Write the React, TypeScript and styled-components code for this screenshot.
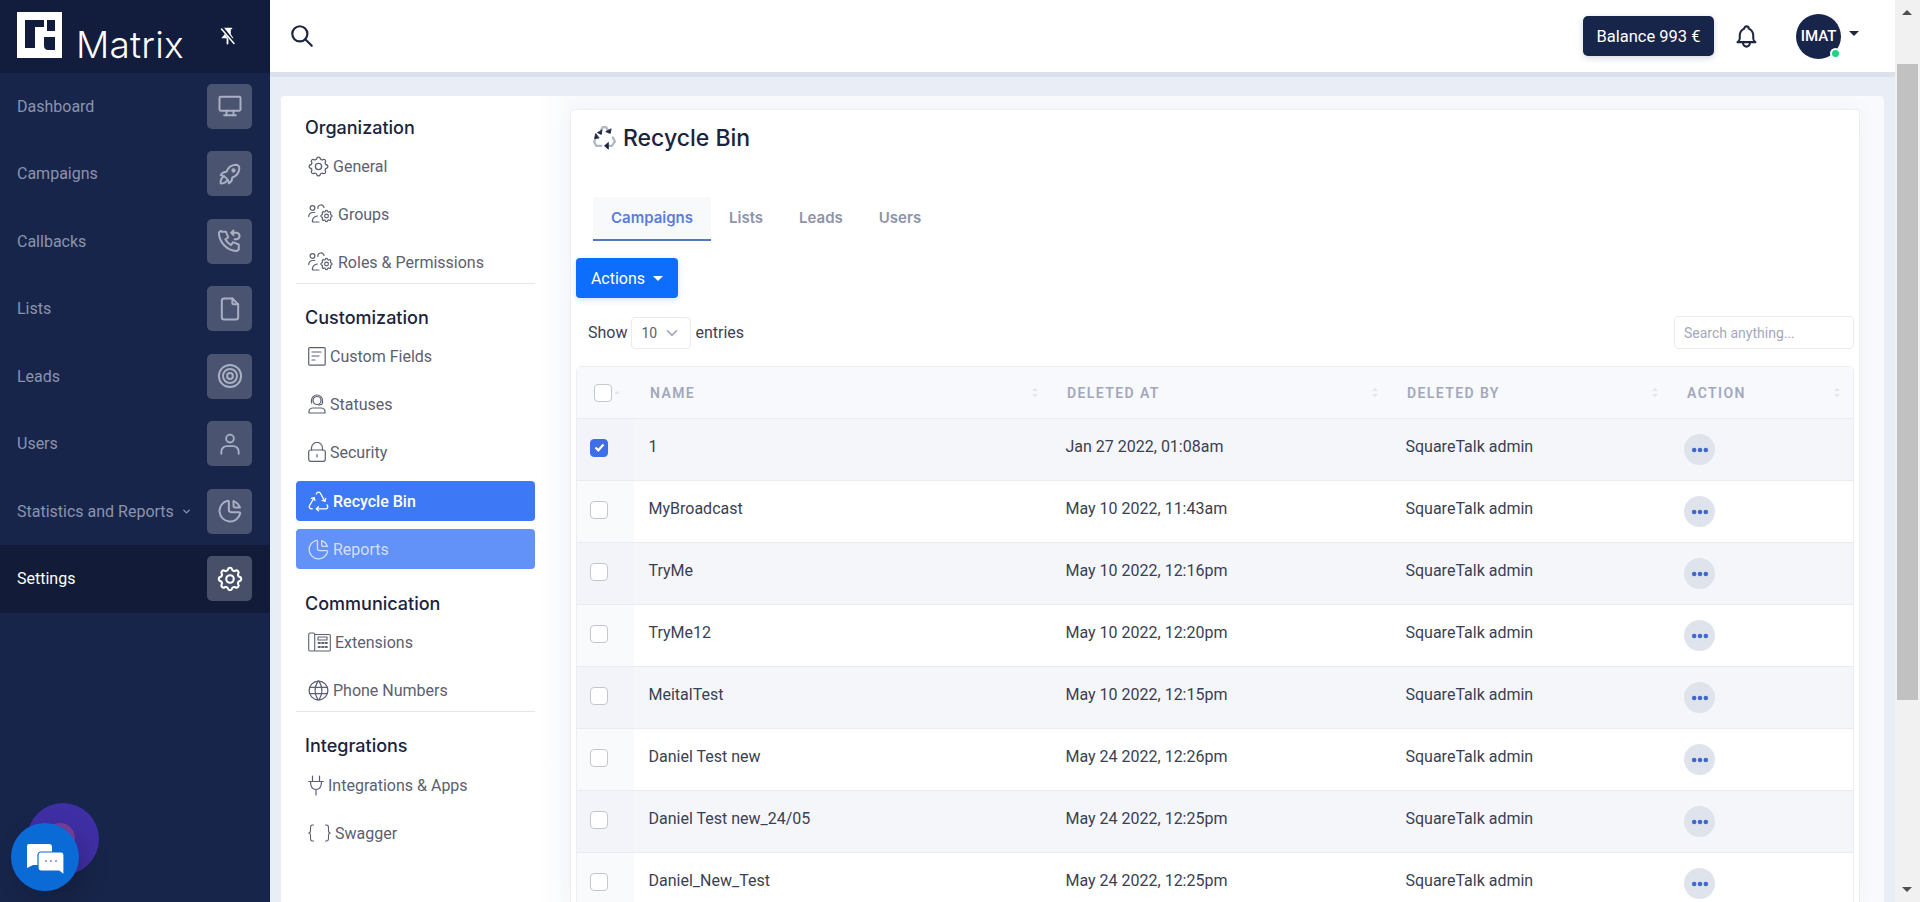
import React from "react";
import styled, { createGlobalStyle } from "styled-components";
import {
  TbDeviceDesktop, TbRocket, TbFile, TbChartPie, TbSettings, TbSearch, TbBell,
  TbRecycle, TbWorld, TbChevronDown, TbDots,
} from "react-icons/tb";

const Global = createGlobalStyle`
  html, body { margin: 0; padding: 0; height: 100%; overflow: hidden; background: #e9edf6; }
  body { font-family: Inter, "Liberation Sans", sans-serif; }
  * { box-sizing: border-box; }
`;

const Shell = styled.div`display: flex; width: 1920px; height: 902px; overflow: hidden;`;
const Sidebar = styled.aside`width: 270px; flex: none; background: #17254a; display: flex; flex-direction: column;`;
const Brand = styled.div`height: 72.5px; flex: none; background: #121d3e; display: flex; align-items: flex-start; padding: 12px 0 0 17px;`;
const BrandText = styled.span`font: 300 37px/1 Inter, sans-serif; color: #fff; margin: 14px 0 0 14px; letter-spacing: .2px;`;
const PinBox = styled.span`color: #fff; display: flex; margin: 15px 0 0 36px;`;
const MenuRow = styled.div<{ $active?: boolean }>`
  height: 67.5px; display: flex; align-items: center; justify-content: space-between;
  padding: 0 18px 0 17px; background: ${p => (p.$active ? "#121b38" : "transparent")};
  color: ${p => (p.$active ? "#fff" : "#8c93ad")}; font: 400 16px Roboto, sans-serif;
`;
const MenuLabel = styled.span`display: flex; align-items: center; gap: 7px; svg { stroke-width: 3; }`;
const MenuIcon = styled.span<{ $active?: boolean }>`
  width: 45px; height: 45px; border-radius: 5px; flex: none; display: flex; align-items: center; justify-content: center;
  background: ${p => (p.$active ? "#484f68" : "#4a5470")}; color: ${p => (p.$active ? "#fff" : "#aab0c4")}; font-size: 28px;
  svg { stroke-width: 1.7; }
`;
const Main = styled.div`flex: 1; display: flex; flex-direction: column; min-width: 0;`;
const Topbar = styled.header`
  height: 72px; flex: none; background: #fff; box-shadow: 0 5px 0 #dbe1ec; display: flex; align-items: center;
  padding: 0 36px 0 19px; position: relative; z-index: 1;
`;
const SearchBtn = styled.span`font-size: 26px; color: #1e2540; display: flex; margin-right: auto;`;
const Balance = styled.button`
  height: 40px; width: 131px; border: 0; border-radius: 5px; background: #17254a; color: #fff;
  font: 400 16.5px Roboto, sans-serif; box-shadow: 0 2px 6px rgba(23,37,74,.18); padding: 0;
`;
const BellBtn = styled.span`font-size: 27px; color: #1e2540; display: flex; margin: 0 36px 0 19px; svg { stroke-width: 1.8; }`;
const Avatar = styled.span`
  width: 45px; height: 45px; border-radius: 50%; background: #17254a; color: #fff; position: relative;
  display: flex; align-items: center; justify-content: center; font: 500 15px Roboto, sans-serif;
`;
const Dot = styled.i`position: absolute; right: 0; bottom: 0; width: 11px; height: 11px; border-radius: 50%; background: #1fd286; border: 2px solid #fff;`;
const Caret = styled.i`width: 0; height: 0; border: 5px solid transparent; border-top-color: #1e2540; border-bottom: 0; margin: -5px 0 0 8px;`;
const Content = styled.div`flex: 1; padding: 24px 11px 0; min-height: 0;`;
const Panel = styled.div`
  height: 100%; background: linear-gradient(90deg, #fff 0, #fff 256px, #f9fafd 289px, #f9fafd 100%);
  border-radius: 4px 4px 0 0; display: flex;
`;
const SettingsNav = styled.nav`width: 289px; flex: none; padding: 12px 35px 0 15px; display: flex; flex-direction: column;`;
const NavHeading = styled.h3<{ $gap?: boolean }>`
  margin: ${p => (p.$gap ? "7px" : "0")} 0 0; height: 38px; flex: none; padding-left: 9px; display: flex; align-items: center;
  font: 500 18px Inter, sans-serif; color: #1a2340;
`;
const NavItem = styled.a<{ $variant?: "active" | "soft"; $nudge?: boolean }>`
  height: 40px; flex: none; display: flex; align-items: center; gap: 4px; padding-left: 12px; margin: ${p => (p.$nudge ? "1px" : "0")} 0 8px; border-radius: 4px;
  font: ${p => (p.$variant === "active" ? 500 : 400)} 16px Roboto, sans-serif;
  color: ${p => (p.$variant === "active" ? "#fff" : p.$variant === "soft" ? "rgba(255,255,255,.72)" : "#5c6072")};
  background: ${p => (p.$variant === "active" ? "#3d78f7" : p.$variant === "soft" ? "#6291f8" : "transparent")};
  svg { flex: none; }
`;
const TightIcon = styled.span`display: flex; margin: 0 -2px; svg { width: 25px; height: 25px; stroke-width: 1.25; }`;
const NavDivider = styled.hr`border: 0; border-top: 1px solid #e4e7ee; margin: -7px 0 14px; width: 100%;`;
const Card = styled.section`
  flex: none; width: 1290px; margin-top: 13px; background: #fff; border: solid #eceef3; border-width: 1px 1px 0; border-radius: 5px 5px 0 0;
  padding: 0 5px; overflow: hidden; box-shadow: 0 0 20px rgba(60,70,110,.04);
`;
const PageTitle = styled.h1`
  margin: 0; height: 55px; padding-left: 16px; display: flex; align-items: center; gap: 6px;
  font: 500 23px Inter, sans-serif; color: #1a2340;
`;
const Tabs = styled.div`display: flex; margin: 32px 0 0 17px; height: 44px;`;
const Tab = styled.a<{ $active?: boolean }>`
  display: flex; align-items: center; justify-content: center; height: 44px; padding: 0 18px 2px;
  font: 600 15px Inter, sans-serif; color: ${p => (p.$active ? "#5a7ddb" : "#8d93a8")};
  background: ${p => (p.$active ? "#f8f9fb" : "transparent")}; border-bottom: 2px solid ${p => (p.$active ? "#5478c0" : "transparent")};
`;
const ActionsBtn = styled.button`
  display: flex; align-items: center; justify-content: center; gap: 8px; margin-top: 17px; width: 102px; height: 40px;
  border: 0; border-radius: 4px; background: #0d6efd; color: #fff; font: 400 16px Roboto, sans-serif; box-shadow: 0 2px 6px rgba(13,110,253,.2);
`;
const ActionsCaret = styled.i`width: 0; height: 0; border: 5px solid transparent; border-top-color: #fff; border-bottom: 0;`;
const Filters = styled.div`display: flex; align-items: center; justify-content: space-between; margin-top: 18px; height: 33px;`;
const ShowLabel = styled.label`display: flex; align-items: center; gap: 4px; padding-left: 12px; font: 400 16px Roboto, sans-serif; color: #3c4156;`;
const SelectBox = styled.span`
  width: 60px; height: 32px; border: 1px solid #e9ebf1; border-radius: 4px; display: flex; align-items: center; justify-content: space-between;
  padding: 0 9px; font-size: 14px; color: #5c6072; svg { color: #9aa0b2; font-size: 18px; }
`;
const SearchBox = styled.span`
  width: 180px; height: 33px; border: 1px solid #e9ebf1; border-radius: 4px; display: flex; align-items: center; padding-left: 9px;
  font: 400 14px Roboto, sans-serif; color: #a3a9bd;
`;
const Table = styled.div`margin-top: 17px; border: solid #eceef3; border-width: 1px 1px 0; border-radius: 5px 5px 0 0; width: 1278px;`;
const grid = "grid-template-columns: 57px 417px 340px 280px 1fr;";
const HeadRow = styled.div`
  ${grid} display: grid; height: 52px; background: #f8f9fc; border-bottom: 1px solid #e9ebf1; align-items: center;
`;
const HeadCell = styled.div`
  display: flex; align-items: center; justify-content: space-between; padding: 0 13px 0 16px; height: 100%;
  font: 600 14px Roboto, sans-serif; letter-spacing: 1.4px; color: #a2a8bb;
`;
const HeadCheckCell = styled.div`display: flex; padding-left: 17px; gap: 2px; align-items: center;`;
const SortMark = styled.span`display: flex; flex-direction: column; gap: 3px;`;
const SortTri = styled.i<{ $down?: boolean }>`
  width: 0; height: 0; border: 3px solid transparent; border-width: ${p => (p.$down ? "3px 3px 0" : "0 3px 3px")};
  border-${p => (p.$down ? "top" : "bottom")}-color: #e4e6ec;
`;
const Row = styled.div<{ $shade: boolean }>`
  ${grid} display: grid; height: 62px; align-items: center; border-bottom: 1px solid #e9ebf1;
  background: ${p => (p.$shade ? "#f5f6fa" : "#fff")};
`;
const CheckCell = styled.div<{ $shade: boolean }>`
  height: 100%; display: flex; align-items: center; padding: 0 0 4px 13px; background: ${p => (p.$shade ? "#f3f4f9" : "#f9fafc")};
`;
const Check = styled.span<{ $on?: boolean }>`
  width: 18px; height: 18px; border-radius: 4px; border: 1px solid ${p => (p.$on ? "#3e6fe8" : "#c5c7cf")};
  background: ${p => (p.$on ? "#3e6fe8" : "#fff")}; display: flex; align-items: center; justify-content: center;
`;
const Cell = styled.div`padding-left: 14.5px; font: 400 16px Roboto, sans-serif; color: #3a3f52; margin-top: -7px;`;
const DotBtn = styled.span`
  margin-left: 13px; width: 31px; height: 31px; border-radius: 50%; background: #dfe3ec; color: #4169c8; display: flex;
  align-items: center; justify-content: center; font-size: 20px;
`;
const Scrollbar = styled.div`width: 25px; flex: none; background: #f1f1f1; position: relative; padding: 0 2px 0 2px;`;
const ArrowUp = styled.i`position: absolute; left: 7px; top: 10px; width: 0; height: 0; border: 5.5px solid transparent; border-bottom-color: #505050; border-top: 0;`;
const ArrowDown = styled.i`position: absolute; left: 7px; bottom: 10px; width: 0; height: 0; border: 5.5px solid transparent; border-top-color: #505050; border-bottom: 0;`;
const Thumb = styled.div`height: 636px; margin-top: 64px; background: #c1c1c1;`;
const ChatBack = styled.div`position: fixed; left: 27px; top: 803px; width: 72px; height: 72px; border-radius: 50%; background: #3f2fa5; z-index: 3;`;
const ChatGlow = styled.div`position: absolute; left: 18px; top: 20px; width: 30px; height: 30px; border-radius: 50%; background: #7b3f9b;`;
const ChatFront = styled.div`
  position: fixed; left: 11px; top: 823px; width: 68px; height: 68px; border-radius: 50%; background: #0a6bd6; z-index: 4;
  display: flex; align-items: center; justify-content: center; padding-top: 4px; box-shadow: 8px 8px 24px rgba(0,0,0,.18);
`;

const S = { fill: "none", stroke: "currentColor", strokeWidth: 1.5, strokeLinecap: "round", strokeLinejoin: "round" } as const;
const gear = "M10.325 4.317c.426 -1.756 2.924 -1.756 3.35 0a1.724 1.724 0 0 0 2.573 1.066c1.543 -.94 3.31 .826 2.37 2.37a1.724 1.724 0 0 0 1.065 2.572c1.756 .426 1.756 2.924 0 3.35a1.724 1.724 0 0 0 -1.066 2.573c.94 1.543 -.826 3.31 -2.37 2.37a1.724 1.724 0 0 0 -2.572 1.065c-.426 1.756 -2.924 1.756 -3.35 0a1.724 1.724 0 0 0 -2.573 -1.066c-1.543 .94 -3.31 -.826 -2.37 -2.37a1.724 1.724 0 0 0 -1.065 -2.572c-1.756 -.426 -1.756 -2.924 0 -3.35a1.724 1.724 0 0 0 1.066 -2.573c-.94 -1.543 .826 -3.31 2.37 -2.37c1 .608 2.296 .07 2.572 -1.065z";

const Logo = () => (
  <svg width="45" height="46" viewBox="0 0 45 46">
    <rect width="45" height="46" fill="#fff" />
    <path d="M8 8H27V15H18V36H8Z" fill="#121d3e" />
    <path d="M30 8H38V19H30Z" fill="#121d3e" />
    <path d="M27 25H38V38H31C28.500 38 27 36 27 34Z" fill="#121d3e" />
  </svg>
);
const PinOff = () => (
  <svg width="16" height="18" viewBox="0 0 16 18" fill="none" strokeLinecap="round">
    <path d="M3.500 1.500h8M5.500 1.500v6l-2.500 3h9l-2 -3v-6" fill="#fff" stroke="#fff" strokeWidth="1.600" />
    <path d="M7.500 11v5.500" stroke="#fff" strokeWidth="1.800" />
    <path d="M3 2l11 14" stroke="#121d3e" strokeWidth="3.400" />
    <path d="M1.500 2l12.500 14.500" stroke="#fff" strokeWidth="1.500" />
  </svg>
);
const CallbackIcon = () => (
  <svg width="28" height="28" viewBox="0 0 24 24" {...S}>
    <path d="M5 4h3.500l2 5l-2.500 1.500a11 11 0 0 0 5 5l1.500 -2.500l5 2v3.500a2 2 0 0 1 -2 2a16 16 0 0 1 -15 -15a2 2 0 0 1 2 -2" />
    <path d="M15 3l-2 2l2 2M13 5h4.500a2.700 2.700 0 0 1 0 5.400h-1.500" />
  </svg>
);
const RingsIcon = () => (
  <svg width="28" height="28" viewBox="0 0 24 24" {...S}>
    <circle cx="12" cy="12" r="9.500" /><circle cx="12" cy="12" r="6" /><circle cx="12" cy="12" r="2.500" />
  </svg>
);
const UserIcon = () => (
  <svg width="26" height="26" viewBox="0 0 24 24" {...S}>
    <circle cx="12" cy="7" r="3.600" />
    <path d="M4 21v-2a5 5 0 0 1 5 -5h6a5 5 0 0 1 5 5v2" />
  </svg>
);
const GearLine = () => (
  <svg viewBox="0 0 24 24" {...S}><path d={gear} /><circle cx="12" cy="12" r="3" /></svg>
);
const TeamGear = () => (
  <svg width="26" height="20" viewBox="0 0 26 20" {...S} strokeWidth={1.200}>
    <circle cx="4.500" cy="4" r="2.400" />
    <path d="M.7 12.500a4 4 0 0 1 4 -4h2" />
    <path d="M10 4.500a3 3 0 0 1 6 -1" />
    <path d="M4.500 18a5 5 0 0 1 5 -6M5 18h6" />
    <svg x="11" y="4.500" width="15" height="15" viewBox="0 0 24 24" strokeWidth={1.900}><path d={gear} /><circle cx="12" cy="12" r="3" /></svg>
  </svg>
);
const FieldsIcon = () => (
  <svg width="18" height="19" viewBox="0 0 18 19" {...S} strokeWidth={1.200}>
    <rect x=".7" y=".7" width="16.500" height="17.500" rx="1" />
    <path d="M4 5h9M4 9h7M4 13h3" />
  </svg>
);
const AgentIcon = () => (
  <svg width="18" height="20" viewBox="0 0 18 20" {...S} strokeWidth={1.200}>
    <circle cx="9" cy="6.500" r="4" />
    <path d="M3.500 9V6.500a5.500 5.500 0 0 1 11 0V9M14.500 9c0 1 -2 2 -4 2" />
    <path d="M1 19v-1.500c0-2 2-3.500 4-3.500h8c2 0 4 1.500 4 3.500V19z" />
  </svg>
);
const LockIcon = () => (
  <svg width="18" height="20" viewBox="0 0 18 20" {...S} strokeWidth={1.200}>
    <rect x=".7" y="8" width="16.600" height="11.300" rx="2" />
    <path d="M3.500 8V6a5.500 5.500 0 0 1 11 0v2M9 12.500v2.500" />
  </svg>
);
const PhoneDesk = () => (
  <svg width="23" height="20" viewBox="0 0 23 20" {...S} strokeWidth={1.100}>
    <rect x=".7" y="1" width="6" height="18" rx="1.500" />
    <path d="M6.700 2.500H21.300a1 1 0 0 1 1 1v14.500a1 1 0 0 1 -1 1H6.700" />
    <rect x="10" y="5" width="9" height="3" />
    <path d="M10.500 11h1.500M14 11h1.500M17.500 11H19M10.500 15h1.500M14 15h1.500M17.500 15H19" strokeWidth={1.800} />
  </svg>
);
const PlugIcon = () => (
  <svg width="16" height="21" viewBox="0 0 16 21" {...S} strokeWidth={1.200}>
    <path d="M4.500 1v5M11.500 1v5M.7 6.500h14.600M2.500 6.500c0 5 2 8 5.500 8s5.500 -3 5.500 -8M8 14.500V20" />
  </svg>
);
const BracesIcon = () => (
  <svg width="23" height="18" viewBox="0 0 23 18" {...S} strokeWidth={1.100}>
    <path d="M5.500 1H4.500C3 1 2.500 2 2.500 3.500v3C2.500 8 1.500 9 .7 9c.8 0 1.800 1 1.800 2.500v3C2.500 16 3 17 4.500 17h1" />
    <path d="M17.500 1h1c1.500 0 2 1 2 2.500v3C20.500 8 21.500 9 22.300 9c-.8 0-1.800 1-1.800 2.500v3c0 1.500 -.5 2.500 -2 2.500h-1" />
  </svg>
);
const TitleRecycle = () => (
  <svg width="25" height="25" viewBox="0 0 24 24" fill="none" strokeWidth={2.200} strokeLinecap="round" strokeLinejoin="round">
    <path d="M9 4.500l1.500 -2.500h3l3 5" stroke="#b3b7c4" />
    <path d="M3 14l-1 2l2 4h5" stroke="#b3b7c4" />
    <path d="M15 20h4l3 -4l-2 -4" stroke="#b3b7c4" />
    <path d="M5.500 7.500L9 9l.5 -4z" fill="#1a2340" stroke="#1a2340" strokeWidth={.8} />
    <path d="M13.500 6.500l4 1.500l.8 -4z" fill="#1a2340" stroke="#1a2340" strokeWidth={.8} />
    <path d="M15.500 17l-3.500 3l3.500 3z" fill="#1a2340" stroke="#1a2340" strokeWidth={.8} />
    <path d="M3.500 8.500l-1 4.500l4 -.5z" fill="#1a2340" stroke="#1a2340" strokeWidth={.8} />
  </svg>
);
const ChatIcon = () => (
  <svg width="37" height="31" viewBox="0 0 37 31">
    <path d="M2 0h20a3 3 0 0 1 3 3v15a3 3 0 0 1 -3 3H6l-6 3V2a2 2 0 0 1 2 -2z" fill="#fff" />
    <path d="M14 8h20a3 3 0 0 1 3 3v20l-5 -4H14a3 3 0 0 1 -3 -3V11a3 3 0 0 1 3 -3z" fill="#fff" stroke="#0a6bd6" strokeWidth="1.200" />
    <circle cx="19" cy="17" r="1" fill="#7a8aa8" /><circle cx="24" cy="17" r="1" fill="#7a8aa8" /><circle cx="29" cy="17" r="1" fill="#7a8aa8" />
  </svg>
);

const menu: { label: string; icon: React.ReactNode; more?: boolean; active?: boolean }[] = [
  { label: "Dashboard", icon: <TbDeviceDesktop /> },
  { label: "Campaigns", icon: <TbRocket /> },
  { label: "Callbacks", icon: <CallbackIcon /> },
  { label: "Lists", icon: <TbFile /> },
  { label: "Leads", icon: <RingsIcon /> },
  { label: "Users", icon: <UserIcon /> },
  { label: "Statistics and Reports", icon: <TbChartPie />, more: true },
  { label: "Settings", icon: <TbSettings size={30} />, active: true },
];

const rows = [
  ["1", "Jan 27 2022, 01:08am"],
  ["MyBroadcast", "May 10 2022, 11:43am"],
  ["TryMe", "May 10 2022, 12:16pm"],
  ["TryMe12", "May 10 2022, 12:20pm"],
  ["MeitalTest", "May 10 2022, 12:15pm"],
  ["Daniel Test new", "May 24 2022, 12:26pm"],
  ["Daniel Test new_24/05", "May 24 2022, 12:25pm"],
  ["Daniel_New_Test", "May 24 2022, 12:25pm"],
];

const Sort = () => (
  <SortMark><SortTri /><SortTri $down /></SortMark>
);

export default function App() {
  return (
    <Shell>
      <Global />
      <Sidebar>
        <Brand>
          <Logo />
          <BrandText>Matrix</BrandText>
          <PinBox><PinOff /></PinBox>
        </Brand>
        {menu.map(m => (
          <MenuRow key={m.label} $active={m.active}>
            <MenuLabel>{m.label}{m.more && <TbChevronDown size={11} />}</MenuLabel>
            <MenuIcon $active={m.active}>{m.icon}</MenuIcon>
          </MenuRow>
        ))}
      </Sidebar>
      <Main>
        <Topbar>
          <SearchBtn><TbSearch /></SearchBtn>
          <Balance>Balance 993 €</Balance>
          <BellBtn><TbBell /></BellBtn>
          <Avatar>IMAT<Dot /></Avatar>
          <Caret />
        </Topbar>
        <Content>
          <Panel>
            <SettingsNav>
              <NavHeading>Organization</NavHeading>
              <NavItem><TightIcon><GearLine /></TightIcon> General</NavItem>
              <NavItem><TeamGear /> Groups</NavItem>
              <NavItem><TeamGear /> Roles &amp; Permissions</NavItem>
              <NavDivider />
              <NavHeading>Customization</NavHeading>
              <NavItem><FieldsIcon /> Custom Fields</NavItem>
              <NavItem><AgentIcon /> Statuses</NavItem>
              <NavItem><LockIcon /> Security</NavItem>
              <NavItem $variant="active" $nudge><TightIcon><TbRecycle /></TightIcon> Recycle Bin</NavItem>
              <NavItem $variant="soft"><TightIcon><TbChartPie /></TightIcon> Reports</NavItem>
              <NavHeading $gap>Communication</NavHeading>
              <NavItem><PhoneDesk /> Extensions</NavItem>
              <NavItem><TightIcon><TbWorld /></TightIcon> Phone Numbers</NavItem>
              <NavDivider />
              <NavHeading>Integrations</NavHeading>
              <NavItem $nudge><PlugIcon /> Integrations &amp; Apps</NavItem>
              <NavItem><BracesIcon /> Swagger</NavItem>
            </SettingsNav>
            <Card>
              <PageTitle><TitleRecycle /> Recycle Bin</PageTitle>
              <Tabs>
                <Tab $active>Campaigns</Tab>
                <Tab>Lists</Tab>
                <Tab>Leads</Tab>
                <Tab>Users</Tab>
              </Tabs>
              <ActionsBtn>Actions <ActionsCaret /></ActionsBtn>
              <Filters>
                <ShowLabel>Show <SelectBox>10 <TbChevronDown /></SelectBox> entries</ShowLabel>
                <SearchBox>Search anything...</SearchBox>
              </Filters>
              <Table>
                <HeadRow>
                  <HeadCheckCell><Check /><SortTri /></HeadCheckCell>
                  <HeadCell>NAME <Sort /></HeadCell>
                  <HeadCell>DELETED AT <Sort /></HeadCell>
                  <HeadCell>DELETED BY <Sort /></HeadCell>
                  <HeadCell>ACTION <Sort /></HeadCell>
                </HeadRow>
                {rows.map((r, i) => (
                  <Row key={r[0]} $shade={i % 2 === 0}>
                    <CheckCell $shade={i % 2 === 0}>
                      <Check $on={i === 0}>
                        {i === 0 && (
                          <svg width="11" height="9" viewBox="0 0 11 9"><path d="M1.500 4.500l2.800 2.800l5.200 -5.800" fill="none" stroke="#fff" strokeWidth="2.200" /></svg>
                        )}
                      </Check>
                    </CheckCell>
                    <Cell>{r[0]}</Cell>
                    <Cell>{r[1]}</Cell>
                    <Cell>SquareTalk admin</Cell>
                    <DotBtn><TbDots strokeWidth={3.5} /></DotBtn>
                  </Row>
                ))}
              </Table>
            </Card>
          </Panel>
        </Content>
      </Main>
      <Scrollbar>
        <ArrowUp />
        <Thumb />
        <ArrowDown />
      </Scrollbar>
      <ChatBack><ChatGlow /></ChatBack>
      <ChatFront><ChatIcon /></ChatFront>
    </Shell>
  );
}
